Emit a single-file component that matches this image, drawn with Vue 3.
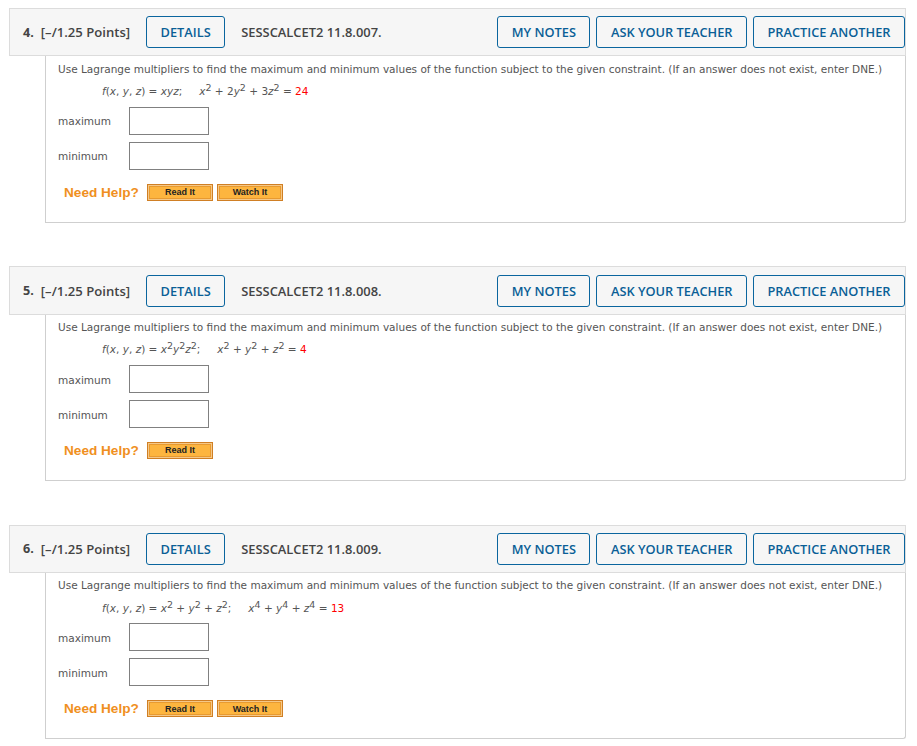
<script setup>
const questions = [
  { num: '4.', code: 'SESSCALCET2 11.8.007.', kind: 'a', value: '24', watch: true },
  { num: '5.', code: 'SESSCALCET2 11.8.008.', kind: 'b', value: '4', watch: false },
  { num: '6.', code: 'SESSCALCET2 11.8.009.', kind: 'c', value: '13', watch: true },
]
</script>

<template>
  <main class="page">
    <section v-for="q in questions" :key="q.num" class="question">
      <header class="head">
        <span class="num">{{ q.num }}</span>
        <span class="points">[–/1.25 Points]</span>
        <button class="btn details">DETAILS</button>
        <span class="code">{{ q.code }}</span>
        <div class="actions">
          <button class="btn">MY NOTES</button>
          <button class="btn">ASK YOUR TEACHER</button>
          <button class="btn">PRACTICE ANOTHER</button>
        </div>
      </header>
      <div class="body">
        <p class="prompt">Use Lagrange multipliers to find the maximum and minimum values of the function subject to the given constraint. (If an answer does not exist, enter DNE.)</p>
        <p v-if="q.kind === 'a'" class="formula"><i>f</i>(<i>x</i>, <i>y</i>, <i>z</i>) = <i>xyz</i>;<span class="sp"></span><i>x</i><sup>2</sup> + 2<i>y</i><sup>2</sup> + 3<i>z</i><sup>2</sup> = <span class="red">{{ q.value }}</span></p>
        <p v-else-if="q.kind === 'b'" class="formula"><i>f</i>(<i>x</i>, <i>y</i>, <i>z</i>) = <i>x</i><sup>2</sup><i>y</i><sup>2</sup><i>z</i><sup>2</sup>;<span class="sp"></span><i>x</i><sup>2</sup> + <i>y</i><sup>2</sup> + <i>z</i><sup>2</sup> = <span class="red">{{ q.value }}</span></p>
        <p v-else class="formula"><i>f</i>(<i>x</i>, <i>y</i>, <i>z</i>) = <i>x</i><sup>2</sup> + <i>y</i><sup>2</sup> + <i>z</i><sup>2</sup>;<span class="sp"></span><i>x</i><sup>4</sup> + <i>y</i><sup>4</sup> + <i>z</i><sup>4</sup> = <span class="red">{{ q.value }}</span></p>
        <div class="answers">
          <label class="row"><span class="lbl">maximum</span><input class="field" type="text" /></label>
          <label class="row"><span class="lbl">minimum</span><input class="field" type="text" /></label>
        </div>
        <div class="help">
          <span class="need">Need Help?</span>
          <button class="orange">Read It</button>
          <button v-if="q.watch" class="orange">Watch It</button>
        </div>
      </div>
    </section>
  </main>
</template>

<style>
body { margin: 0; background: #fff; }
</style>

<style scoped>
.page {
  width: 917px;
  height: 746px;
  overflow: hidden;
  box-sizing: border-box;
  padding: 8px 11px 0 9px;
  font-family: "DejaVu Sans", Verdana, sans-serif;
}
.question { margin-bottom: 43.8px; }
.head {
  height: 48.3px;
  box-sizing: border-box;
  display: flex;
  align-items: center;
  background: #f6f6f6;
  border: 1px solid #dcdcdc;
  padding: 0 0 0 13px;
  font-family: "Open Sans", sans-serif;
  font-size: 13px;
  font-weight: 600;
  color: #444;
}
.num { margin-right: 7px; font-weight: 700; font-size: 12.6px; }
.points { margin-right: 16px; font-size: 13.1px; }
.btn {
  height: 32px;
  box-sizing: border-box;
  padding: 0 13.5px;
  background: transparent;
  border: 1px solid #0a659e;
  border-radius: 3px;
  color: #0a5f96;
  font: 600 12.8px "Open Sans", sans-serif;
  white-space: nowrap;
}
.details { margin-right: 16px; }
.code { font-size: 12.9px; }
.actions { margin-left: auto; display: flex; gap: 6px; }
.body {
  margin-left: 36px;
  height: 166.3px;
  box-sizing: border-box;
  border: 1px solid #cfcfcf;
  border-top: 0;
  border-radius: 0 0 3px 0;
  padding: 5.3px 0 0 12px;
  color: #555;
  font-size: 10.5px;
}
.prompt { margin: 0; line-height: 14px; white-space: nowrap; }
.formula {
  margin: 8.5px 0 0 44px;
  line-height: 14px;
  height: 14px;
  color: #555;
  white-space: nowrap;
}
.formula sup { font-size: 9.5px; line-height: 0; vertical-align: 4px; }
.sp { display: inline-block; width: 17px; }
.red { color: #f00; }
.answers { margin-top: 8.5px; display: flex; flex-direction: column; gap: 7px; }
.row { display: flex; align-items: center; }
.lbl { width: 71px; padding-top: 1.6px; }
.field {
  width: 80px;
  height: 28px;
  box-sizing: border-box;
  border: 1px solid #808080;
  background: #fff;
  padding: 0;
  margin: 0;
}
.help { margin: 13.5px 0 0 6px; display: flex; align-items: center; height: 18px; }
.need {
  width: 83px;
  font: 700 13.6px "Liberation Sans", Arial, sans-serif;
  color: #f08f21;
}
.orange {
  width: 66px;
  height: 17px;
  margin-right: 4px;
  padding: 0;
  box-sizing: border-box;
  background: #fdb53f;
  border: 1px solid #d07f24;
  box-shadow: inset 0 0 0 1px #f5c888, inset 0 0 0 2px #e89a30;
  color: #222;
  font: 700 9px "Liberation Sans", Arial, sans-serif;
}
</style>
